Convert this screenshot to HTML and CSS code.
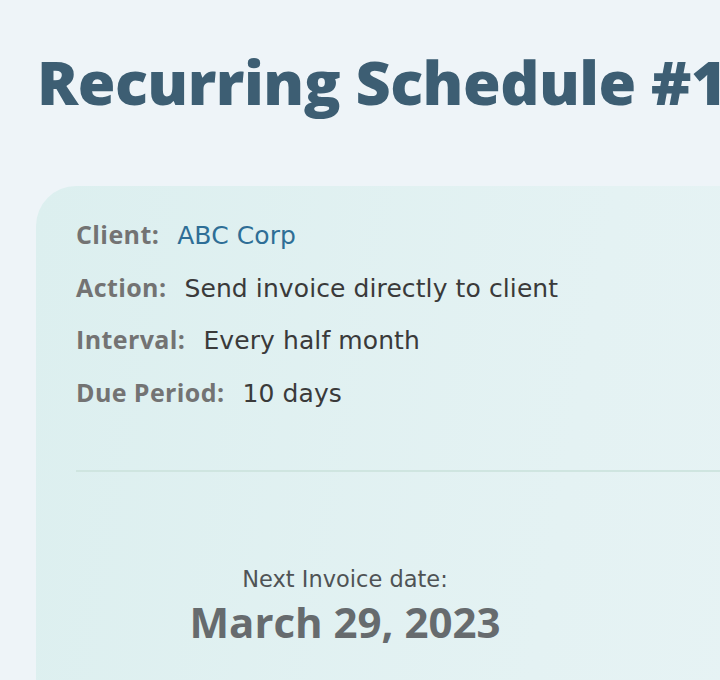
FILE: index.html
```html
<!DOCTYPE html>
<html lang="en">
<head>
<meta charset="utf-8">
<title>Recurring Schedule #1</title>
<link rel="stylesheet" href="styles.css">
</head>
<body>
<main class="page">
  <h1 class="title">Recurring Schedule #1</h1>
  <section class="card">
    <dl class="details">
      <div class="row"><dt>Client:</dt><dd class="link">ABC Corp</dd></div>
      <div class="row"><dt>Action:</dt><dd>Send invoice directly to client</dd></div>
      <div class="row"><dt>Interval:</dt><dd>Every half month</dd></div>
      <div class="row"><dt>Due Period:</dt><dd>10 days</dd></div>
    </dl>
    <hr class="divider">
    <div class="summary">
      <div class="next">
        <div class="next-label">Next Invoice date:</div>
        <div class="next-date">March 29, 2023</div>
      </div>
    </div>
  </section>
</main>
</body>
</html>
```
FILE: styles.css
```css
html, body {
  margin: 0;
  padding: 0;
  overflow: hidden;
  background: #eef4f8;
}
body {
  font-family: "DejaVu Sans", "Open Sans", sans-serif;
}
.page {
  width: 1100px;
  padding: 42px 0 0 36px;
  box-sizing: border-box;
}
.title {
  margin: 0 0 0 1px;
  font-family: "Open Sans", sans-serif;
  font-size: 61px;
  line-height: 80px;
  font-weight: 800;
  color: #3d5e73;
  letter-spacing: -0.5px;
  white-space: nowrap;
}
.card {
  margin-top: 64px;
  padding: 22px 40px 40px 40px;
  border-radius: 40px 0 0 0;
  background: linear-gradient(100deg, #dcefef 0%, #e4f2f3 50%, #eaf4f6 100%);
  min-height: 520px;
}
.details {
  margin: 0;
}
.row {
  display: flex;
  align-items: baseline;
  gap: 18px;
  height: 52.5px;
  line-height: 52.5px;
  font-size: 25px;
}
.row dt {
  font-family: "Open Sans", sans-serif;
  font-weight: 700;
  font-size: 25px;
  letter-spacing: 0.4px;
  color: #737373;
}
.row dd {
  margin: 0;
  color: #3a3a3a;
  letter-spacing: 0.1px;
}
.row dd.link {
  color: #2e6e96;
}
.divider {
  border: 0;
  height: 2px;
  background: #cfe5e0;
  margin: 52px 0 0 0;
}
.summary {
  display: flex;
  padding-top: 92px;
}
.next {
  width: 538px;
  text-align: center;
}
.next-label {
  font-size: 22.5px;
  line-height: 30px;
  color: #4f5355;
}
.next-date {
  font-family: "Open Sans", sans-serif;
  font-size: 42px;
  line-height: 56px;
  font-weight: 700;
  color: #666b6e;
}
```
